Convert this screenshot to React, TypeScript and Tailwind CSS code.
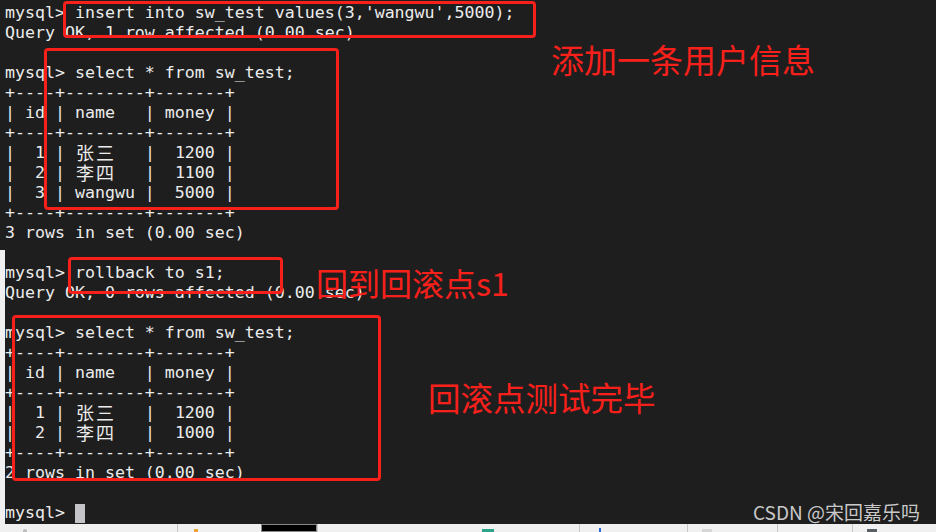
import React from "react";

const lines = [
  "mysql> insert into sw_test values(3,'wangwu',5000);",
  "Query OK, 1 row affected (0.00 sec)",
  "",
  "mysql> select * from sw_test;",
  "+----+--------+-------+",
  "| id | name   | money |",
  "+----+--------+-------+",
  "|  1 | 张三   |  1200 |",
  "|  2 | 李四   |  1100 |",
  "|  3 | wangwu |  5000 |",
  "+----+--------+-------+",
  "3 rows in set (0.00 sec)",
  "",
  "mysql> rollback to s1;",
  "Query OK, 0 rows affected (0.00 sec)",
  "",
  "mysql> select * from sw_test;",
  "+----+--------+-------+",
  "| id | name   | money |",
  "+----+--------+-------+",
  "|  1 | 张三   |  1200 |",
  "|  2 | 李四   |  1000 |",
  "+----+--------+-------+",
  "2 rows in set (0.00 sec)",
  "",
];

// CJK chars take two terminal cells
const TermLine = ({ text }: { text: string }) => {
  const parts: React.ReactNode[] = [];
  let buf = "";
  Array.from(text).forEach((ch, i) => {
    if (/[\u4e00-\u9fff]/.test(ch)) {
      if (buf) parts.push(buf);
      buf = "";
      parts.push(
        <span
          key={i}
          className="inline-block align-top w-[20px] h-[20px] leading-[19px] text-center text-[18px] font-['Noto_Sans_CJK_SC',sans-serif]"
        >
          {ch}
        </span>
      );
    } else {
      buf += ch;
    }
  });
  if (buf) parts.push(buf);
  return <div className="h-[20px] leading-[20px] whitespace-pre">{parts.length ? parts : " "}</div>;
};

const Box = ({ className }: { className: string }) => (
  <div className={`absolute border-[3px] border-[#f7201b] rounded-[4px] ${className}`} />
);

const Note = ({ className, children }: { className: string; children: React.ReactNode }) => (
  <div
    className={`absolute leading-none text-[#f7201b] whitespace-nowrap font-['Noto_Sans_CJK_SC',sans-serif] ${className}`}
  >
    {children}
  </div>
);

export default function App() {
  return (
    <div className="relative w-[936px] h-[532px] flex flex-col overflow-hidden bg-[#f0f0f0]">
      <div className="flex h-[524px]">
        <div className="w-[5px] flex flex-col">
          <div className="h-[250px] bg-[#1e1e1e]" />
          <div className="flex-1 bg-[#f0f0f0]" />
        </div>
        <div className="flex-1 bg-[#1e1e1e] pt-[3px] text-[#ececec] text-[16.6px] font-['DejaVu_Sans_Mono',monospace]">
          {lines.map((l, i) => (
            <TermLine key={i} text={l} />
          ))}
          <div className="h-[20px] leading-[20px] whitespace-pre flex items-center">
            <span>mysql&gt; </span>
            <span className="inline-block w-[10px] h-[19px] bg-[#c4c4c8]" />
          </div>
        </div>
      </div>

      {/* taskbar strip */}
      <div className="flex h-[8px] bg-[#f0f0f0]">
        <div className="w-[178px] border-r border-[#c8c8c8] relative">
          <div className="absolute left-[23px] top-[5px] w-[4px] h-[3px] bg-[#bdbdbd] rounded-t-full" />
        </div>
        <div className="w-[83px] relative">
          <div className="absolute left-[16px] top-[5px] w-[4px] h-[3px] bg-[#e8a33c]" />
        </div>
        <div className="w-[56px] bg-black border border-[#888]" />
        <div className="w-[263px] border-l border-r border-[#c8c8c8] relative">
          <div className="absolute left-[164px] top-[5px] w-[12px] h-[3px] bg-[#2aa58a]" />
        </div>
        <div className="w-[108px] border-r border-[#c8c8c8] relative">
          <div className="absolute left-[19px] top-[4px] w-[2px] h-[4px] bg-[#2b6ad8]" />
        </div>
        <div className="w-[90px] border-r border-[#c8c8c8] relative">
          <div className="absolute left-[14px] top-[5px] w-[10px] h-[3px] bg-[#d6d6d6]" />
        </div>
        <div className="w-[75px] border-r border-[#c8c8c8]" />
        <div className="flex-1 relative">
          <div className="absolute left-[14px] top-[5px] w-[10px] h-[3px] bg-[#5a5f66]" />
        </div>
      </div>

      <Box className="left-[63px] top-[1px] w-[473px] h-[37px]" />
      <Box className="left-[44px] top-[48px] w-[295px] h-[162px]" />
      <Box className="left-[68px] top-[257px] w-[215px] h-[37px]" />
      <Box className="left-[12px] top-[315px] w-[369px] h-[166px]" />

      <Note className="left-[551px] top-[43px] text-[33px]">添加一条用户信息</Note>
      <Note className="left-[316px] top-[266px] text-[32px]">回到回滚点s1</Note>
      <Note className="left-[428px] top-[381px] text-[32.5px]">回滚点测试完毕</Note>

      <div className="absolute right-[16px] top-[500px] text-[19px] leading-[24px] text-[#c9c9c9] font-['Noto_Sans_CJK_SC',sans-serif] whitespace-nowrap">
        CSDN @宋回嘉乐吗
      </div>
    </div>
  );
}
